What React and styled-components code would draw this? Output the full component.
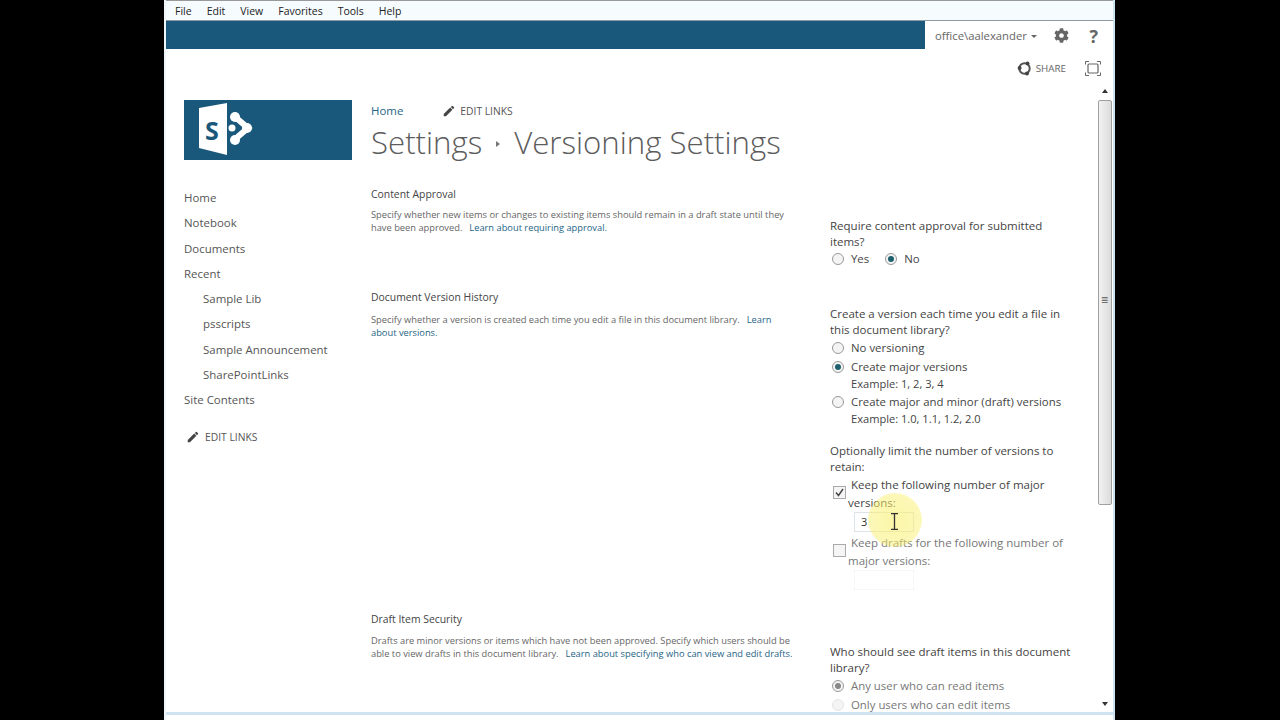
import React from "react";
import styled, { createGlobalStyle } from "styled-components";
import { MdEdit } from "react-icons/md";
import { FaCog } from "react-icons/fa";

const GlobalStyle = createGlobalStyle`
  html, body {
    margin: 0;
    height: 720px;
    overflow: hidden;
    background: #000;
  }
  * {
    box-sizing: border-box;
  }
  body {
    font-family: "Open Sans", "Liberation Sans", sans-serif;
    font-size: 11.5px;
    color: #444;
  }
`;

const Window = styled.div`
  position: relative;
  width: 951px;
  height: 720px;
  margin-left: 164px;
  background: #fff;
  border-left: 2px solid #eef6fb;
  border-right: 2px solid #cfe3f1;
  display: flex;
  flex-direction: column;
  overflow: hidden;
`;

const MenuBar = styled.div`
  height: 21px;
  flex: none;
  display: flex;
  align-items: center;
  gap: 15px;
  padding: 1px 0 0 9px;
  background: #f6fcfe;
  border-top: 1px solid #999;
  border-bottom: 1px solid #8c9ba3;
  color: #222;
  font-size: 10.5px;
`;

const SuiteBar = styled.div`
  height: 28px;
  flex: none;
  display: flex;
`;

const SuiteFill = styled.div`
  width: 759px;
  background: #19587a;
`;

const SuiteRight = styled.div`
  flex: 1;
  display: flex;
  align-items: center;
  padding: 1px 0 0 10px;
  color: #666;
  font-size: 11.3px;
`;

const Caret = styled.span`
  width: 0;
  height: 0;
  margin: 2px 0 0 4px;
  border-left: 3.5px solid transparent;
  border-right: 3.5px solid transparent;
  border-top: 3.5px solid #666;
`;

const SuiteIcon = styled.span`
  display: flex;
  justify-content: center;
  width: 16px;
  margin-left: ${(p) => p.$left}px;
  color: #666;
  font-size: ${(p) => p.$size}px;
  font-weight: 700;
`;

const ShareRow = styled.div`
  height: 38px;
  flex: none;
  display: flex;
  align-items: center;
  justify-content: flex-end;
  padding: 0 12px 0 0;
  color: #666;
  font-size: 9.8px;
`;

const ShareLabel = styled.span`
  margin: 0 19px 0 4px;
`;

const Body = styled.div`
  flex: 1;
  min-height: 0;
  display: flex;
`;

const Page = styled.div`
  flex: 1;
  min-width: 0;
  display: flex;
  gap: 19px;
  padding: 13px 0 0 18px;
  overflow: hidden;
`;

const LeftColumn = styled.div`
  width: 168px;
  flex: none;
`;

const Logo = styled.div`
  position: relative;
  height: 60px;
  margin-bottom: 25px;
  background: #19587a;
`;

const LogoLetter = styled.span`
  position: absolute;
  left: 21px;
  top: 12px;
  color: #19587a;
  font-size: 25px;
  font-weight: 700;
  line-height: 36px;
`;

const NavItem = styled.div`
  height: 25.3px;
  line-height: 25.3px;
  padding-left: ${(p) => (p.$sub ? 19 : 0)}px;
  color: #555;
  font-size: 11.45px;
`;

const EditLinks = styled.div`
  display: flex;
  align-items: center;
  gap: ${(p) => p.$gap}px;
  margin: ${(p) => p.$margin};
  color: #555;
  font-size: 10.3px;
  svg {
    font-size: 14px;
    color: #444;
  }
`;

const MainColumn = styled.div`
  flex: 1;
  min-width: 0;
`;

const Crumbs = styled.div`
  display: flex;
  align-items: center;
  height: 22px;
`;

const HomeLink = styled.span`
  margin-top: -2px;
  color: #1e6485;
  font-size: 11.45px;
`;

const Title = styled.h1`
  display: flex;
  align-items: center;
  height: 40px;
  margin: 0 0 24px;
  color: #5c5c5c;
  font-size: 31.2px;
  font-weight: 300;
  white-space: nowrap;
`;

const TitleArrow = styled.span`
  width: 0;
  height: 0;
  margin: 4px 14px 0 14px;
  border-top: 3.5px solid transparent;
  border-bottom: 3.5px solid transparent;
  border-left: 4px solid #777;
`;

const Section = styled.section`
  display: grid;
  grid-template-columns: 459px 245px;
  height: ${(p) => p.$height}px;
`;

const SectionInfo = styled.div`
  padding-right: 36px;
`;

const SectionTitle = styled.h3`
  margin: 0 0 ${(p) => p.$gap}px;
  color: #444;
  font-size: 10.4px;
  font-weight: 400;
  line-height: 16px;
`;

const SectionText = styled.p`
  margin: 0;
  color: #666;
  font-size: 9.3px;
  line-height: 13px;
`;

const Learn = styled.span`
  margin-left: 7px;
  color: #1e6485;
`;

const Controls = styled.div`
  padding-top: ${(p) => p.$top}px;
`;

const Question = styled.div`
  margin: ${(p) => p.$margin || 0};
  color: #444;
  font-size: 11.5px;
  line-height: 16px;
  width: 245px;
`;

const InlineOptions = styled.div`
  display: flex;
  gap: 14px;
  margin-top: -1px;
`;

const Option = styled.div`
  display: flex;
  align-items: center;
  gap: 7px;
  height: 19px;
  color: ${(p) => (p.$faded ? "#777" : "#444")};
  font-size: 11.4px;
`;

const Radio = styled.span`
  position: relative;
  width: 12px;
  height: 12px;
  margin-left: 2px;
  flex: none;
  border-radius: 50%;
  background: #f4f4f4;
  border: 1px solid ${(p) => (p.$faint ? "#e6e6e6" : "#999")};
  &::after {
    content: "";
    display: ${(p) => (p.$checked ? "block" : "none")};
    position: absolute;
    inset: 2px;
    border-radius: 50%;
    background: ${(p) => (p.$faded ? "#888" : "#1d5f6e")};
  }
`;

const Example = styled.div`
  height: 16px;
  padding-left: 21px;
  color: #444;
  font-size: 11.1px;
  line-height: 15px;
`;

const CheckRow = styled.div`
  display: flex;
  gap: 2px;
  margin-top: ${(p) => p.$top}px;
`;

const CheckBox = styled.span`
  display: flex;
  align-items: center;
  justify-content: center;
  width: 13px;
  height: 13px;
  margin: 10px 0 0 3px;
  flex: none;
  background: #f5f5f5;
  border: 1px solid #aaa;
  color: #444;
`;

const CheckText = styled.div`
  width: 222px;
  text-indent: 3px;
  color: ${(p) => (p.$faded ? "#777" : "#444")};
  font-size: 11.5px;
  line-height: 18px;
`;

const NumberInput = styled.div`
  width: 60px;
  height: 20px;
  margin-left: 24px;
  padding-left: 6px;
  color: #333;
  border: 1px solid ${(p) => (p.$faint ? "#f6f6f6" : "#dde3e6")};
  font-size: 11px;
  line-height: 18px;
`;

const Highlight = styled.div`
  position: absolute;
  left: 702px;
  top: 493px;
  width: 54px;
  height: 54px;
  border-radius: 50%;
  background: radial-gradient(
    circle,
    rgba(250, 240, 110, 0.6) 0%,
    rgba(250, 240, 110, 0.5) 65%,
    rgba(250, 240, 110, 0) 100%
  );
  pointer-events: none;
`;

const TextCursor = styled.svg`
  position: absolute;
  left: 724px;
  top: 513px;
`;

const Scrollbar = styled.div`
  width: 17px;
  flex: none;
  display: flex;
  flex-direction: column;
  align-items: center;
  margin-bottom: 2px;
  background: #fff;
`;

const ScrollArrow = styled.span`
  width: 0;
  height: 0;
  margin: ${(p) => (p.$down ? "0 0 4px" : "2px 0 7px")};
  border-left: 3.5px solid transparent;
  border-right: 3.5px solid transparent;
  border-${(p) => (p.$down ? "top" : "bottom")}: 4px solid #333;
`;

const ScrollThumb = styled.div`
  width: 14px;
  height: 405px;
  display: flex;
  align-items: center;
  justify-content: center;
  padding-bottom: 5px;
  background: linear-gradient(90deg, #f2f2f2, #dcdcdc);
  border: 1px solid #a0a0a0;
  border-radius: 2px;
  color: #555;
  font-size: 12px;
  line-height: 1;
`;

const ScrollTrack = styled.div`
  flex: 1;
`;

const BottomEdge = styled.div`
  height: 3px;
  flex: none;
  margin-bottom: 5px;
  background: #cfe3f1;
`;

const SharePointLogo = () => (
  <svg
    width="62"
    height="56"
    viewBox="0 0 62 56"
    style={{ position: "absolute", left: 10, top: 3 }}
  >
    <path d="M5 5 L33 0 V52 L5 45 Z" fill="#fff" />
    <path d="M40 13 L54 25 L40 37" fill="none" stroke="#fff" strokeWidth="6" />
    <circle cx="41" cy="14" r="5" fill="#fff" />
    <circle cx="41" cy="37" r="5" fill="#fff" />
    <circle cx="53" cy="25" r="5" fill="#fff" />
    <circle cx="38" cy="25" r="3.5" fill="#fff" />
  </svg>
);

const ShareIcon = () => (
  <svg width="15" height="15" viewBox="0 0 15 15" fill="none" stroke="#555">
    <circle cx="7.5" cy="7.5" r="5.2" strokeWidth="2" />
    <circle cx="2.6" cy="7" r="2" fill="#444" stroke="none" />
    <circle cx="10.5" cy="2.6" r="2" fill="#444" stroke="none" />
    <circle cx="10" cy="12.6" r="2" fill="#444" stroke="none" />
  </svg>
);

const FocusIcon = () => (
  <svg width="16" height="15" viewBox="0 0 16 15" fill="none" stroke="#666">
    <path d="M.5 3.5V.5H4M12 .5h3.5v3M.5 11.5v3H4M12 14.5h3.5v-3" />
    <rect x="3" y="3" width="10" height="9" rx="1" strokeWidth="1.2" />
  </svg>
);

const navItems = [
  { label: "Home" },
  { label: "Notebook" },
  { label: "Documents" },
  { label: "Recent" },
  { label: "Sample Lib", sub: true },
  { label: "psscripts", sub: true },
  { label: "Sample Announcement", sub: true },
  { label: "SharePointLinks", sub: true },
  { label: "Site Contents" },
];

const App = () => (
  <>
    <GlobalStyle />
    <Window>
      <MenuBar>
        {["File", "Edit", "View", "Favorites", "Tools", "Help"].map((m) => (
          <span key={m}>{m}</span>
        ))}
      </MenuBar>
      <SuiteBar>
        <SuiteFill />
        <SuiteRight>
          office\aalexander
          <Caret />
          <SuiteIcon $left={17} $size={15}>
            <FaCog />
          </SuiteIcon>
          <SuiteIcon $left={16} $size={18}>
            ?
          </SuiteIcon>
        </SuiteRight>
      </SuiteBar>
      <ShareRow>
        <ShareIcon />
        <ShareLabel>SHARE</ShareLabel>
        <FocusIcon />
      </ShareRow>
      <Body>
        <Page>
          <LeftColumn>
            <Logo>
              <SharePointLogo />
              <LogoLetter>S</LogoLetter>
            </Logo>
            {navItems.map((item) => (
              <NavItem key={item.label} $sub={item.sub}>
                {item.label}
              </NavItem>
            ))}
            <EditLinks $gap={5} $margin="17px 0 0 2px">
              <MdEdit />
              EDIT LINKS
            </EditLinks>
          </LeftColumn>
          <MainColumn>
            <Crumbs>
              <HomeLink>Home</HomeLink>
              <EditLinks $gap={4} $margin="0 0 0 39px">
                <MdEdit />
                EDIT LINKS
              </EditLinks>
            </Crumbs>
            <Title>
              Settings
              <TitleArrow />
              Versioning Settings
            </Title>
            <Section $height={103}>
              <SectionInfo>
                <SectionTitle $gap={6}>Content Approval</SectionTitle>
                <SectionText>
                  Specify whether new items or changes to existing items should
                  remain in a draft state until they have been approved.
                  <Learn>Learn about requiring approval.</Learn>
                </SectionText>
              </SectionInfo>
              <Controls $top={32}>
                <Question>Require content approval for submitted items?</Question>
                <InlineOptions>
                  <Option>
                    <Radio />
                    Yes
                  </Option>
                  <Option>
                    <Radio $checked />
                    No
                  </Option>
                </InlineOptions>
              </Controls>
            </Section>
            <Section $height={322}>
              <SectionInfo>
                <SectionTitle $gap={8}>Document Version History</SectionTitle>
                <SectionText>
                  Specify whether a version is created each time you edit a file
                  in this document library.
                  <Learn>Learn about versions.</Learn>
                </SectionText>
              </SectionInfo>
              <Controls $top={17}>
                <Question>
                  Create a version each time you edit a file in this document
                  library?
                </Question>
                <Option>
                  <Radio />
                  No versioning
                </Option>
                <Option>
                  <Radio $checked />
                  Create major versions
                </Option>
                <Example>Example: 1, 2, 3, 4</Example>
                <Option>
                  <Radio />
                  Create major and minor (draft) versions
                </Option>
                <Example>Example: 1.0, 1.1, 1.2, 2.0</Example>
                <Question $margin="16px 0 0">
                  Optionally limit the number of versions to retain:
                </Question>
                <CheckRow $top={1}>
                  <CheckBox>
                    <svg width="9" height="9" viewBox="0 0 9 9" fill="none">
                      <path d="M1 4.5 L3.5 7.5 L8 1" stroke="#444" strokeWidth="1.4" />
                    </svg>
                  </CheckBox>
                  <CheckText>Keep the following number of major versions:</CheckText>
                </CheckRow>
                <NumberInput>3</NumberInput>
                <CheckRow $top={2}>
                  <CheckBox />
                  <CheckText $faded>
                    Keep drafts for the following number of major versions:
                  </CheckText>
                </CheckRow>
                <NumberInput $faint />
              </Controls>
            </Section>
            <Section $height={120}>
              <SectionInfo>
                <SectionTitle $gap={7}>Draft Item Security</SectionTitle>
                <SectionText>
                  Drafts are minor versions or items which have not been
                  approved. Specify which users should be able to view drafts in
                  this document library.
                  <Learn>Learn about specifying who can view and edit drafts.</Learn>
                </SectionText>
              </SectionInfo>
              <Controls $top={33}>
                <Question>
                  Who should see draft items in this document library?
                </Question>
                <Option $faded>
                  <Radio $checked $faded />
                  Any user who can read items
                </Option>
                <Option $faded>
                  <Radio $faint />
                  Only users who can edit items
                </Option>
              </Controls>
            </Section>
          </MainColumn>
        </Page>
        <Scrollbar>
          <ScrollArrow />
          <ScrollThumb>≡</ScrollThumb>
          <ScrollTrack />
          <ScrollArrow $down />
        </Scrollbar>
      </Body>
      <BottomEdge />
      <Highlight />
      <TextCursor width="9" height="17" viewBox="0 0 9 17" fill="none" stroke="#333" strokeWidth="1.3">
        <path d="M1 .7h7M1 16.3h7M4.5 .7v15.6" />
      </TextCursor>
    </Window>
  </>
);

export default App;
